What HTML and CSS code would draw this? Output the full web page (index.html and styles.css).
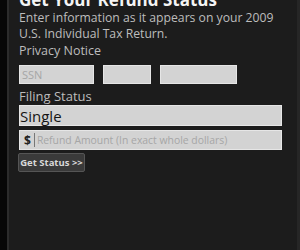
FILE: index.html
```html
<!DOCTYPE html>
<html>
<head>
<meta charset="utf-8">
<link rel="stylesheet" href="styles.css">
</head>
<body>
<div class="frame">
  <div class="panel">
    <div class="title">Get Your Refund Status</div>
    <p class="intro">Enter information as it appears on your 2009 U.S. Individual Tax Return.</p>
    <div class="privacy">Privacy Notice</div>
    <div class="ssn-row">
      <div class="field ssn1"><span class="ph small">SSN</span></div>
      <div class="field ssn2"></div>
      <div class="field ssn3"></div>
    </div>
    <div class="label">Filing Status</div>
    <div class="field wide select">Single</div>
    <div class="field wide amount"><span class="dollar">$</span><span class="cursor"></span><span class="ph">Refund Amount (In exact whole dollars)</span></div>
    <div class="btn">Get Status &gt;&gt;</div>
  </div>
</div>
</body>
</html>
```
FILE: styles.css
```css
html, body {
  margin: 0;
  padding: 0;
  background: #070707;
  width: 300px;
  height: 250px;
  overflow: hidden;
  font-family: "Open Sans", "Noto Sans", sans-serif;
}
.frame {
  display: flex;
  height: 250px;
  padding-left: 7px;
}
.panel {
  width: 278px;
  height: 250px;
  background: #1c1c1c;
  border-left: 2px solid #2c2c2c;
  border-right: 3px solid #262626;
  padding-left: 10px;
  box-sizing: content-box;
  display: flex;
  flex-direction: column;
  align-items: flex-start;
}
.title {
  color: #f4f4f4;
  font-weight: bold;
  font-size: 17px;
  line-height: 20px;
  margin-top: -10px;
  white-space: nowrap;
}
.intro {
  margin: 0;
  color: #bdbdbd;
  font-size: 12.2px;
  line-height: 16px;
  width: 270px;
}
.privacy {
  color: #bdbdbd;
  font-size: 12.5px;
  line-height: 18px;
  margin-top: 0;
}
.ssn-row {
  display: flex;
  gap: 9px;
  margin-top: 5px;
}
.field {
  background: #d3d3d3;
  border: 1px solid #e6e6e6;
  box-sizing: border-box;
  height: 19px;
  display: flex;
  align-items: center;
}
.ssn1 { width: 75px; padding-left: 2px; }
.ssn2 { width: 48px; }
.ssn3 { width: 77px; }
.ph {
  color: #a6a6a6;
  font-size: 10.4px;
  white-space: nowrap;
}
.ph.small { font-size: 11px; }
.label {
  color: #bdbdbd;
  font-size: 13px;
  line-height: 18px;
  margin-top: 3px;
}
.wide { width: 263px; }
.select {
  height: 21px;
  margin-top: 0;
  color: #151515;
  font-size: 15px;
  padding-left: 0;
}
.amount {
  height: 20px;
  margin-top: 4px;
  padding-left: 4px;
}
.dollar {
  color: #222;
  font-weight: bold;
  font-size: 12px;
}
.cursor {
  width: 1px;
  height: 14px;
  background: #777;
  margin: 0 2px 0 3px;
}
.btn {
  margin-top: 3px;
  margin-left: -1px;
  height: 19px;
  width: 67px;
  box-sizing: border-box;
  background: #3a3a3a;
  border: 1px solid #555;
  border-radius: 2px;
  color: #d8d8d8;
  font-size: 9.5px;
  font-weight: bold;
  display: flex;
  align-items: center;
  justify-content: center;
  white-space: nowrap;
}
```
